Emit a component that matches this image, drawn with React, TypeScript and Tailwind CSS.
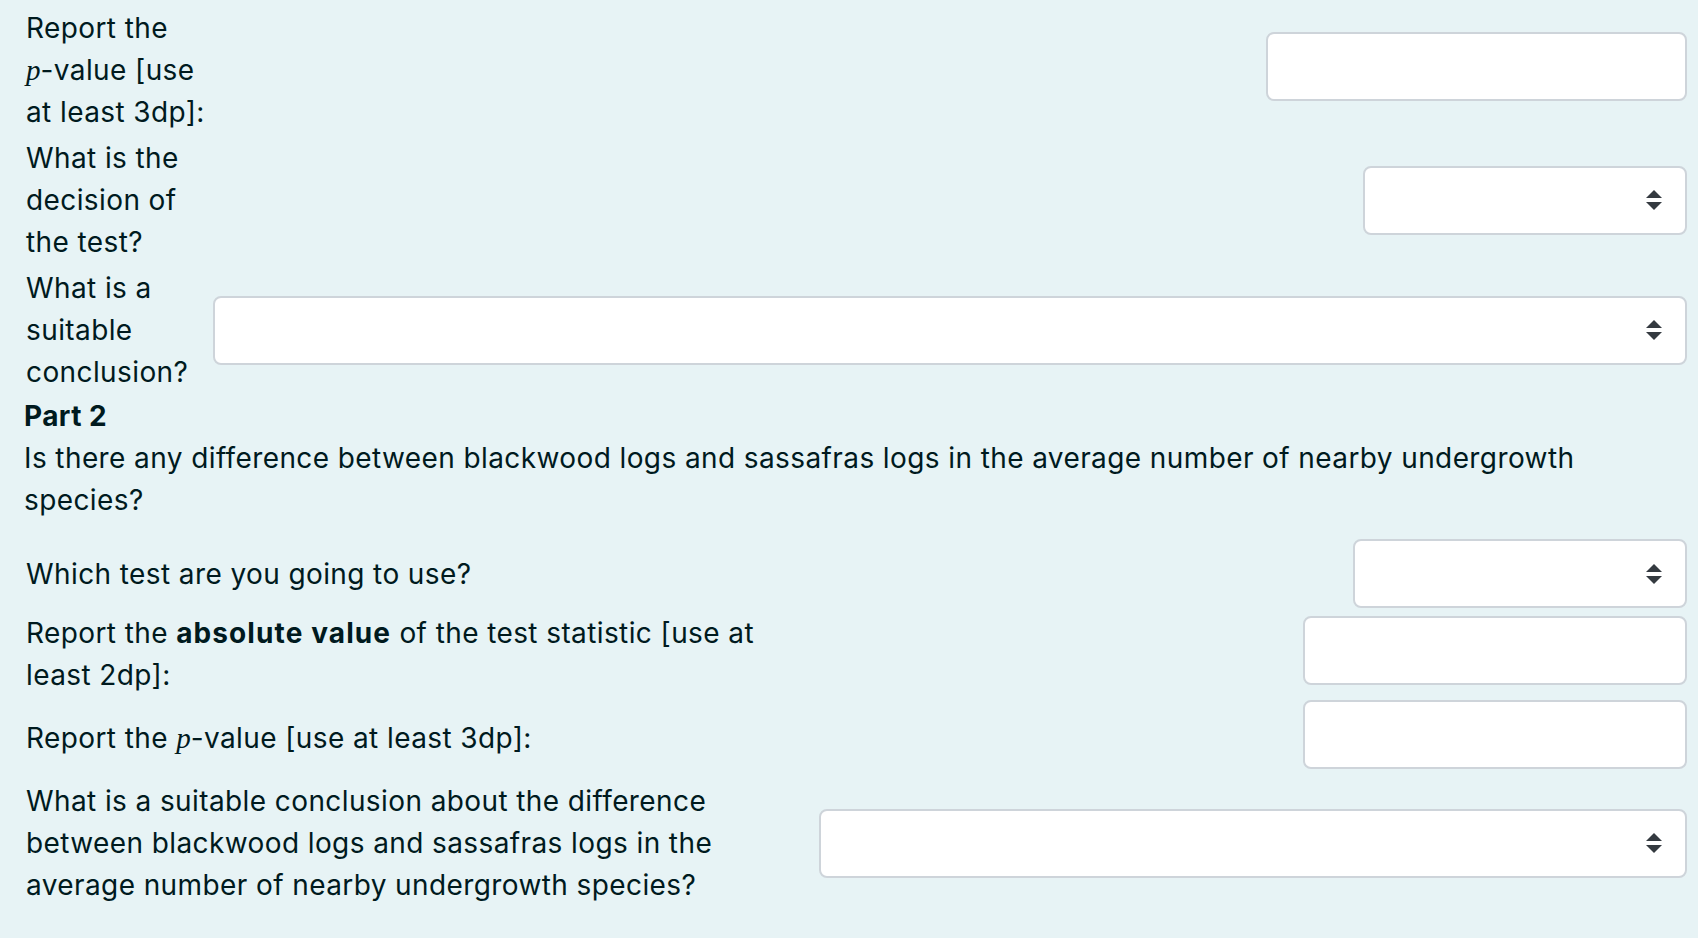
import React from "react";

const Arrows = () => (
  <svg
    viewBox="0 0 4 5"
    className="pointer-events-none absolute right-[25px] top-1/2 h-[20px] w-[16px] -translate-y-1/2"
  >
    <path d="M2 0L0 2h4zm0 5L0 3h4z" fill="#343a40" />
  </svg>
);

const TextBox = ({ w }: { w: string }) => (
  <input
    type="text"
    className={`${w} mb-[7px] h-[69px] rounded-[8px] border-2 border-[#ced4da] bg-white px-[24px] outline-none`}
  />
);

const SelectBox = ({ w }: { w: string }) => (
  <div className={`relative ${w}`}>
    <select className="h-[69px] w-full appearance-none rounded-[8px] border-2 border-[#ced4da] bg-white px-[24px] outline-none">
      <option value=""></option>
    </select>
    <Arrows />
  </div>
);

const PValue = () => (
  <span className="whitespace-nowrap">
    <span className="font-['Liberation_Serif'] text-[29px] italic tracking-normal">p</span>-value
  </span>
);

const Row = ({
  label,
  labelW,
  children,
}: {
  label: React.ReactNode;
  labelW: string;
  children: React.ReactNode;
}) => (
  <div className="flex items-center py-[2px]">
    <div className={`${labelW} shrink-0 pl-[2px]`}>{label}</div>
    <div className="flex flex-1 justify-end">{children}</div>
  </div>
);

export default function App() {
  return (
    <div className="min-h-screen bg-[#e7f3f5] pl-[24px] pr-[11px] pt-[5px] font-['Inter',sans-serif] text-[28px] leading-[42px] tracking-[0.4px] text-[#001a1e]">
      <div>
        <Row labelW="w-[189px]" label={<>Report the <PValue /> [use at least 3dp]:</>}>
          <TextBox w="w-[421px]" />
        </Row>
        <Row labelW="w-[189px]" label="What is the decision of the test?">
          <SelectBox w="w-[324px]" />
        </Row>
        <Row labelW="w-[189px]" label="What is a suitable conclusion?">
          <SelectBox w="w-full" />
        </Row>
      </div>

      <h4 className="font-bold">Part 2</h4>
      <p className="mb-[16px] max-w-[1560px]">
        Is there any difference between blackwood logs and sassafras logs in the average number of nearby undergrowth species?
      </p>

      <div>
        <Row labelW="w-[795px] pr-[12px]" label="Which test are you going to use?">
          <SelectBox w="w-[334px]" />
        </Row>
        <Row
          labelW="w-[795px] pr-[12px]"
          label={
            <>
              Report the <b className="tracking-[1.1px]">absolute value</b> of the test statistic [use at least 2dp]:
            </>
          }
        >
          <TextBox w="w-[384px]" />
        </Row>
        <Row labelW="w-[795px] pr-[12px]" label={<>Report the <PValue /> [use at least 3dp]:</>}>
          <TextBox w="w-[384px]" />
        </Row>
        <Row
          labelW="w-[795px] pr-[12px]"
          label="What is a suitable conclusion about the difference between blackwood logs and sassafras logs in the average number of nearby undergrowth species?"
        >
          <SelectBox w="w-[868px]" />
        </Row>
      </div>
    </div>
  );
}
